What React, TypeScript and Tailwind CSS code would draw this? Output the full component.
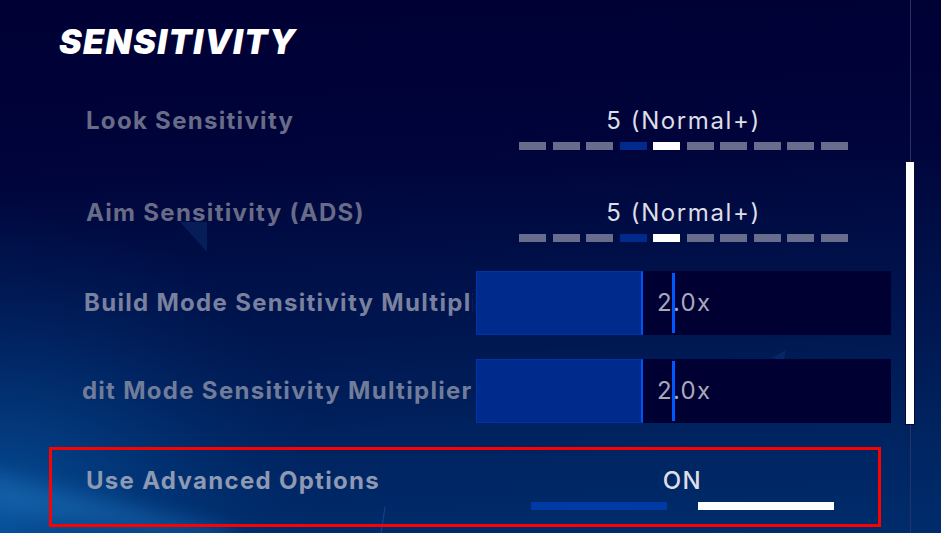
const FONT = { fontFamily: "Inter, 'Noto Sans', sans-serif" };

const DASHES = ["g", "g", "g", "b", "w", "g", "g", "g", "g", "g"];

function DashBar() {
  return (
    <div className="mt-[7px] flex w-[329px] justify-between">
      {DASHES.map((d, i) => (
        <span
          key={i}
          className={
            d === "w"
              ? "h-[8px] w-[27px] bg-white"
              : d === "b"
                ? "h-[8px] w-[27px] bg-[#002a8c]"
                : "h-[8px] w-[27px] bg-[#686d8e]"
          }
        />
      ))}
    </div>
  );
}

function StepRow({ label, value }: { label: string; value: string }) {
  return (
    <div className="flex h-[64px] items-start">
      <div className="w-[427px] pl-[37px] pt-[16px] text-[24px] font-bold leading-[28px] tracking-[1.3px] text-[#696c87]">
        {label}
      </div>
      <div className="flex w-[415px] flex-col items-center pt-[16px]">
        <span className="text-[24px] leading-[28px] tracking-[1.6px] text-[#dddee7]">{value}</span>
        <DashBar />
      </div>
    </div>
  );
}

function SliderRow({
  label,
  shift,
  tone,
}: {
  label: string;
  shift: string;
  tone: string;
}) {
  return (
    <div className="flex h-[64px] items-center">
      <div className="ml-[34px] mr-[3px] w-[390px] overflow-hidden">
        <div className={`whitespace-nowrap text-[24px] font-bold leading-[28px] tracking-[1.3px] ${shift} ${tone}`}>
          {label}
        </div>
      </div>
      <div className="flex h-[64px] w-[415px]">
        <div className="w-[167px] border border-r-[2px] border-[#0034aa] border-r-[#0052f5] bg-[#002b8c]" />
        <div className="relative flex flex-1 items-center bg-[#000033] pl-[14px]">
          <span className="text-[24px] leading-[28px] tracking-[1.3px] text-[#a8aabc]">2.0x</span>
          <span className="absolute bottom-[2px] left-[29px] top-[2px] w-[3px] bg-[#0058ff]" />
        </div>
      </div>
    </div>
  );
}

export default function App() {
  return (
    <div
      className="relative h-[533px] w-[941px] overflow-hidden bg-[linear-gradient(178deg,#000034_0%,#00043a_30%,#000d45_45%,#001650_62%,#00235f_80%,#002c6c_100%)]"
      style={FONT}
    >
      {/* background glow and faint shapes */}
      <svg className="absolute inset-0" width="941" height="533" viewBox="0 0 941 533">
        <defs>
          <radialGradient id="glow" cx="0" cy="533" r="330" gradientUnits="userSpaceOnUse">
            <stop offset="0" stopColor="#0a62b0" stopOpacity="0.7" />
            <stop offset="0.55" stopColor="#034a92" stopOpacity="0.3" />
            <stop offset="1" stopColor="#00306e" stopOpacity="0" />
          </radialGradient>
          <filter id="soft" x="-50%" y="-50%" width="200%" height="200%">
            <feGaussianBlur stdDeviation="10" />
          </filter>
        </defs>
        <rect width="941" height="533" fill="url(#glow)" />
        <polygon points="-20,470 230,530 230,545 -20,510" fill="#2a86d0" opacity="0.35" filter="url(#soft)" />
        <polygon points="180,222 207,222 207,252" fill="#0a2a68" opacity="0.6" />
        <polygon points="772,358 786,350 784,360" fill="#0a3070" opacity="0.6" />
        <line x1="385" y1="507" x2="381" y2="533" stroke="#1d5aa8" strokeWidth="1" opacity="0.6" />
      </svg>

      <div className="relative flex h-full">
        <div className="w-[905px]">
          <h1 className="pl-[59px] pt-[25px] text-[34px] font-black italic leading-[34px] tracking-[1.4px] text-white">
            SENSITIVITY
          </h1>

          <div className="mt-[32px] pl-[49px]">
            <StepRow label="Look Sensitivity" value="5 (Normal+)" />
            <div className="mt-[28px]">
              <StepRow label="Aim Sensitivity (ADS)" value="5 (Normal+)" />
            </div>
            <div className="mt-[24px]">
              <SliderRow label="Build Mode Sensitivity Multiplier" shift="ml-[1px]" tone="text-[#7a819e]" />
            </div>
            <div className="mt-[24px]">
              <SliderRow label="Edit Mode Sensitivity Multiplier" shift="-ml-[17px]" tone="text-[#717c9a]" />
            </div>

            <div className="mt-[24px] h-[80px] w-[832px] border-[3px] border-[#ff0000] pl-[34px]">
              <div className="flex items-start pt-[17px]">
                <div className="w-[445px] text-[24px] font-bold leading-[28px] tracking-[1.3px] text-[#8e99b4]">
                  Use Advanced Options
                </div>
                <div className="flex w-[303px] flex-col items-center">
                  <span className="text-[24px] font-medium leading-[28px] tracking-[1.5px] text-[#dddee7]">ON</span>
                  <div className="mt-[7px] flex w-full justify-between">
                    <span className="h-[8px] w-[136px] bg-[#003aa4]" />
                    <span className="h-[8px] w-[136px] bg-white" />
                  </div>
                </div>
              </div>
            </div>
          </div>
        </div>

        {/* scrollbar */}
        <div className="relative w-[10px]">
          <span className="absolute bottom-0 left-[5px] top-0 w-px bg-[#27316a]" />
          <div className="relative mt-[161px] h-[264px] w-[10px] border border-[#0a0a30] bg-white" />
        </div>
      </div>
    </div>
  );
}
